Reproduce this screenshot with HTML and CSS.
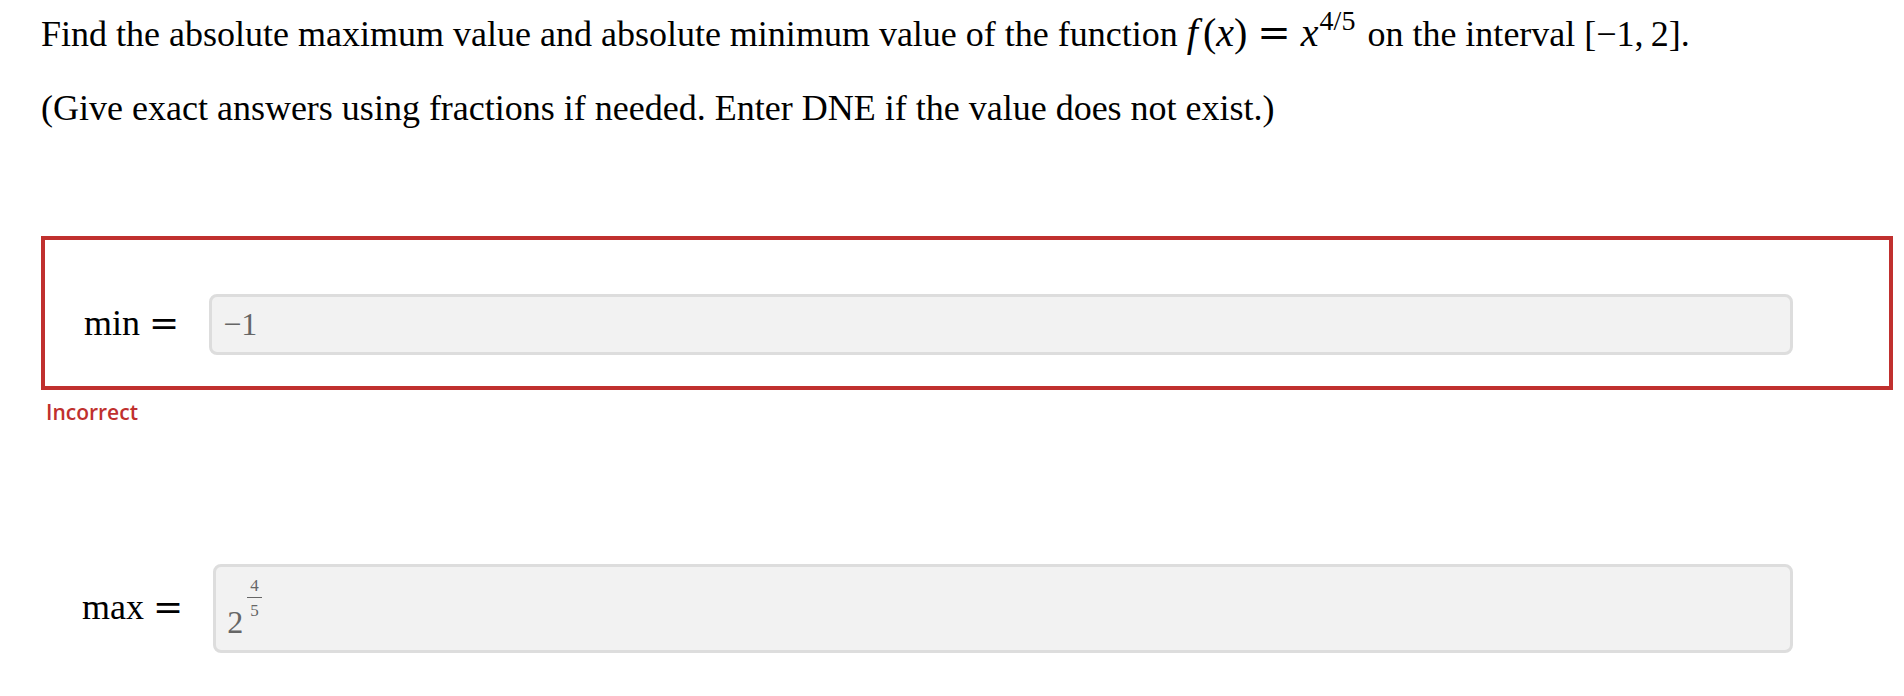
FILE: index.html
```html
<!DOCTYPE html>
<html lang="en">
<head>
<meta charset="utf-8">
<title>Absolute extrema</title>
<link rel="stylesheet" href="styles.css">
</head>
<body>
<div class="page">
  <p class="prompt">Find the absolute maximum value and absolute minimum value of the function <span class="math"><i class="fn">f</i>(<i>x</i>) <span class="eq">=</span> <i>x</i><sup class="exp">4/5</sup></span> on the interval <span class="interval">[−1,&#8201;2]</span>.</p>
  <p class="prompt">(Give exact answers using fractions if needed. Enter DNE if the value does not exist.)</p>

  <div class="answer answer-incorrect">
    <span class="label">min <span class="eq">=</span></span>
    <div class="field"><span class="value">−1</span></div>
  </div>
  <div class="feedback">Incorrect</div>

  <div class="answer answer-plain">
    <span class="label">max <span class="eq">=</span></span>
    <div class="field"><span class="value">2<span class="frac"><span class="num">4</span><span class="den">5</span></span></span></div>
  </div>
</div>
</body>
</html>
```
FILE: styles.css
```css
html, body {
  margin: 0;
  background: #ffffff;
}

body {
  font-family: "Liberation Serif", "Times New Roman", serif;
  color: #000000;
}

.page {
  padding: 13px 11px 40px 41px;
}

.prompt {
  margin: 0;
  font-size: 36px;
  line-height: 42px;
}

.prompt + .prompt {
  margin-top: 32px;
}

.math {
  font-size: 40px;
  line-height: 0.9;
}

.math i {
  font-style: italic;
}

.math .fn {
  margin-right: 5px;
}

.eq {
  font-family: "DejaVu Serif", "Liberation Serif", serif;
}

.exp {
  font-family: "Liberation Serif", "Times New Roman", serif;
  font-size: 28px;
  line-height: 0;
  vertical-align: 16px;
  margin-left: 1px;
  margin-right: 3px;
}

.answer {
  display: flex;
  align-items: center;
  border: 4px solid transparent;
  padding: 54px 96px 31px 39px;
}

.answer-incorrect {
  margin-top: 107px;
  border-color: #c0302e;
}

.answer-plain {
  margin-top: 79px;
  padding-left: 37px;
}

.label {
  font-size: 36px;
  line-height: 42px;
  padding-bottom: 4px;
  margin-right: 30px;
  white-space: nowrap;
}

.field {
  flex: 1;
  background: #f2f2f2;
  border: 3px solid #dddddd;
  border-radius: 8px;
  padding: 9px 11px;
}

.value {
  font-size: 32px;
  line-height: 37px;
  color: #666666;
}

.frac {
  display: inline-block;
  vertical-align: 17px;
  margin-left: 4px;
  font-size: 17px;
  text-align: center;
}

.num {
  display: block;
  line-height: 20px;
  padding: 0 3px 1px;
  border-bottom: 1px solid #666666;
}

.den {
  display: block;
  line-height: 20px;
  padding: 3px 3px 0;
}

.feedback {
  margin-top: 8px;
  padding-left: 5px;
  font-family: "Open Sans", "Liberation Sans", sans-serif;
  font-weight: 600;
  font-size: 21px;
  line-height: 29px;
  color: #c0302e;
}
```
